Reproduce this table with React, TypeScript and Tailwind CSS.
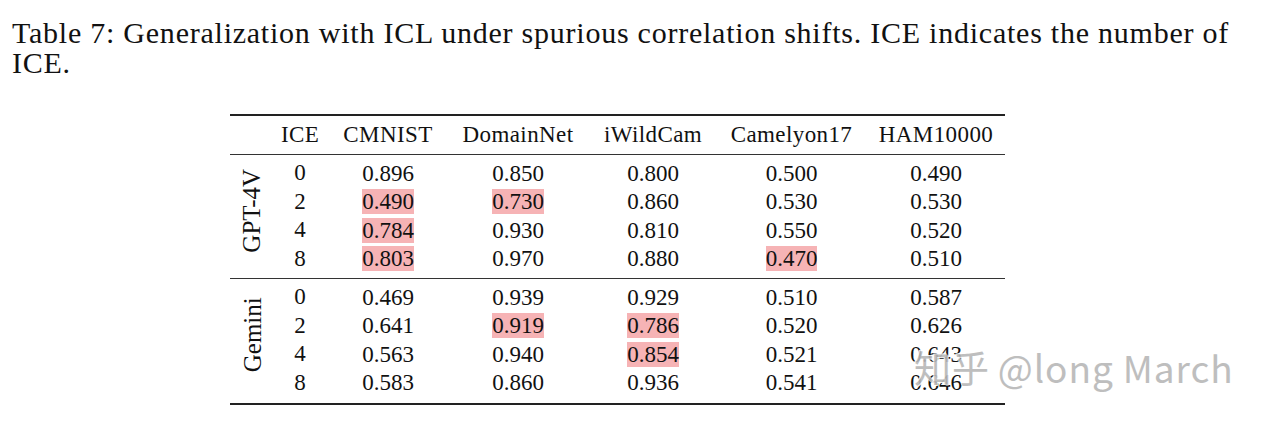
const serif = { fontFamily: '"Liberation Serif", "Times New Roman", serif' };

const cols = ["w-[40px]", "w-[60px]", "w-[116px]", "w-[144px]", "w-[126px]", "w-[151px]", "w-[138px]"];
const headers = ["ICE", "CMNIST", "DomainNet", "iWildCam", "Camelyon17", "HAM10000"];

type Cell = { v: string; hl?: boolean };
type Group = { name: string; rows: { ice: string; cells: Cell[] }[] };

const groups: Group[] = [
  {
    name: "GPT-4V",
    rows: [
      { ice: "0", cells: [{ v: "0.896" }, { v: "0.850" }, { v: "0.800" }, { v: "0.500" }, { v: "0.490" }] },
      { ice: "2", cells: [{ v: "0.490", hl: true }, { v: "0.730", hl: true }, { v: "0.860" }, { v: "0.530" }, { v: "0.530" }] },
      { ice: "4", cells: [{ v: "0.784", hl: true }, { v: "0.930" }, { v: "0.810" }, { v: "0.550" }, { v: "0.520" }] },
      { ice: "8", cells: [{ v: "0.803", hl: true }, { v: "0.970" }, { v: "0.880" }, { v: "0.470", hl: true }, { v: "0.510" }] },
    ],
  },
  {
    name: "Gemini",
    rows: [
      { ice: "0", cells: [{ v: "0.469" }, { v: "0.939" }, { v: "0.929" }, { v: "0.510" }, { v: "0.587" }] },
      { ice: "2", cells: [{ v: "0.641" }, { v: "0.919", hl: true }, { v: "0.786", hl: true }, { v: "0.520" }, { v: "0.626" }] },
      { ice: "4", cells: [{ v: "0.563" }, { v: "0.940" }, { v: "0.854", hl: true }, { v: "0.521" }, { v: "0.643" }] },
      { ice: "8", cells: [{ v: "0.583" }, { v: "0.860" }, { v: "0.936" }, { v: "0.541" }, { v: "0.646" }] },
    ],
  },
];

function GroupBlock({ group, first }: { group: Group; first: boolean }) {
  return (
    <div className={`flex ${first ? "pt-[4px] pb-[5px]" : "pt-[4px] pb-[6px]"}`}>
      <div className={`${cols[0]} flex items-center justify-center`}>
        <span className="-rotate-90 whitespace-nowrap inline-block text-[25px] translate-x-[2px] -translate-y-[5px]">
          {group.name}
        </span>
      </div>
      <div className="flex flex-col">
        {group.rows.map((r) => (
          <div key={r.ice} className="flex h-[28.5px] items-center">
            <div className={`${cols[1]} text-center`}>{r.ice}</div>
            {r.cells.map((c, i) => (
              <div key={i} className={`${cols[i + 2]} flex justify-center`}>
                <span className={c.hl ? "bg-[#f6b3b5] leading-[25px]" : "leading-[25px]"}>{c.v}</span>
              </div>
            ))}
          </div>
        ))}
      </div>
    </div>
  );
}

export default function App() {
  return (
    <div className="relative w-[1271px] h-[423px] bg-white text-[#111] overflow-hidden" style={serif}>
      <p className="pl-[12px] pt-[18px] text-[30px] leading-[30px] tracking-[0.76px]">
        Table 7: Generalization with ICL under spurious correlation shifts. ICE indicates the number of
        <br />
        ICE.
      </p>

      <div className="ml-[230px] mt-[36px] w-[775px] text-[23px]">
        <div className="border-t-2 border-[#222]" />
        <div className="flex h-[38px] items-center tracking-[0.4px]">
          <div className={cols[0]} />
          {headers.map((h, i) => (
            <div key={h} className={`${cols[i + 1]} text-center`}>
              {h}
            </div>
          ))}
        </div>
        <div className="border-t border-[#333]" />
        <GroupBlock group={groups[0]} first />
        <div className="border-t border-[#333]" />
        <GroupBlock group={groups[1]} first={false} />
        <div className="border-t-2 border-[#222]" />
      </div>

      <div
        className="absolute left-[914px] top-[344px] text-[37px] leading-[46px] tracking-[0.9px] text-[#b8b8b8] whitespace-nowrap opacity-90"
        style={{ fontFamily: '"Noto Sans CJK SC", "Noto Sans", sans-serif', textShadow: "1px 1px 0 #fff, -1px -1px 0 #fff" }}
      >
        知乎<span className="ml-[8px]">@long March</span>
      </div>
    </div>
  );
}
